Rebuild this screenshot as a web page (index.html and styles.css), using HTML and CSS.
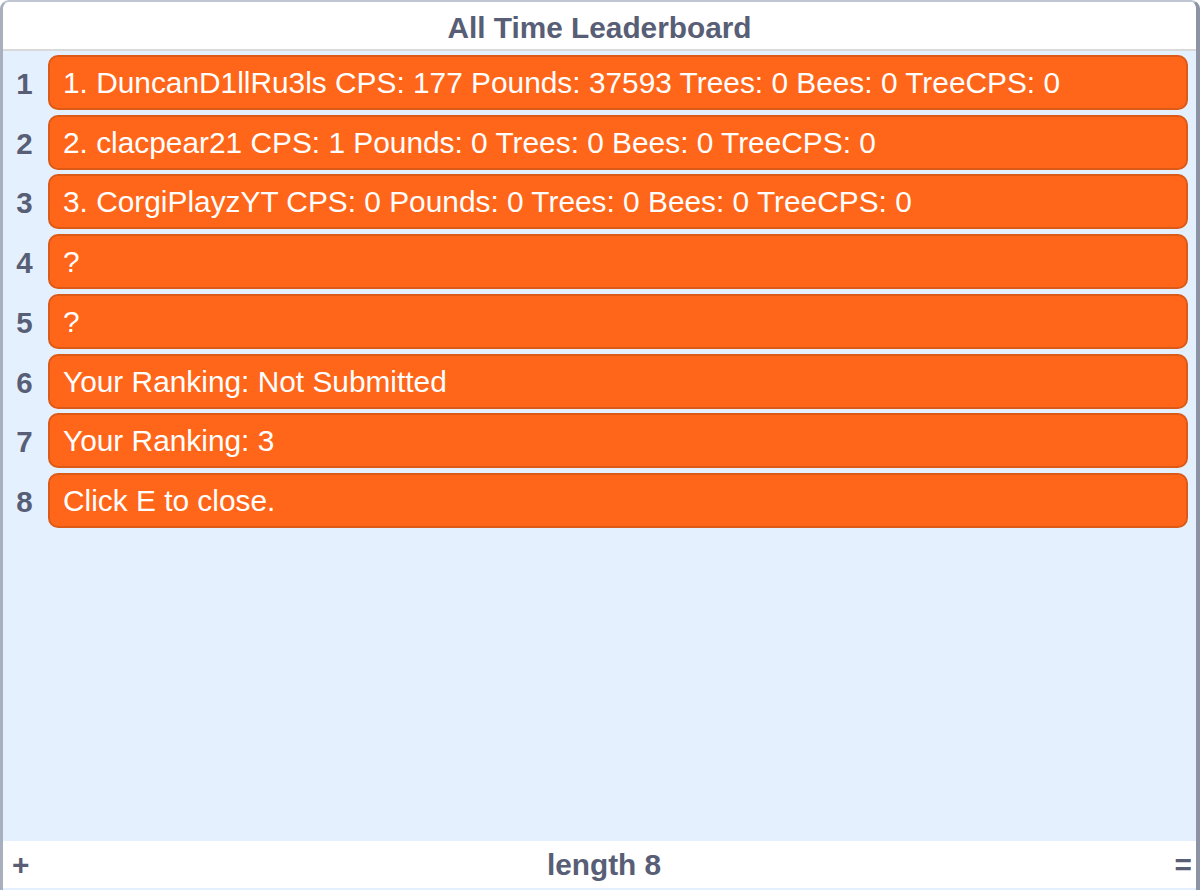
FILE: index.html
```html
<!DOCTYPE html>
<html>
<head>
<meta charset="utf-8">
<link rel="stylesheet" href="styles.css">
</head>
<body>
<div class="monitor">
  <div class="header">All Time Leaderboard</div>
  <div class="list">
    <div class="row"><div class="index">1</div><div class="value">1. DuncanD1llRu3ls CPS: 177 Pounds: 37593 Trees: 0 Bees: 0 TreeCPS: 0</div></div>
    <div class="row"><div class="index">2</div><div class="value">2. clacpear21 CPS: 1 Pounds: 0 Trees: 0 Bees: 0 TreeCPS: 0</div></div>
    <div class="row"><div class="index">3</div><div class="value">3. CorgiPlayzYT CPS: 0 Pounds: 0 Trees: 0 Bees: 0 TreeCPS: 0</div></div>
    <div class="row"><div class="index">4</div><div class="value">?</div></div>
    <div class="row"><div class="index">5</div><div class="value">?</div></div>
    <div class="row"><div class="index">6</div><div class="value">Your Ranking: Not Submitted</div></div>
    <div class="row"><div class="index">7</div><div class="value">Your Ranking: 3</div></div>
    <div class="row"><div class="index">8</div><div class="value">Click E to close.</div></div>
  </div>
  <div class="footer">
    <span class="add">+</span>
    <span class="length">length 8</span>
    <span class="resize">=</span>
  </div>
  <div class="bottom-line"></div>
</div>
</body>
</html>
```

FILE: styles.css
```css
html, body {
  margin: 0;
  padding: 0;
  background: #ffffff;
}

body {
  font-family: "Liberation Sans", Arial, sans-serif;
  color: #575e75;
}

.monitor {
  box-sizing: border-box;
  width: 1200px;
  height: 890px;
  display: flex;
  flex-direction: column;
  border-left: 3px solid #a9b0bd;
  border-right: 4px solid #8b93a5;
  border-top: 2px solid #bfc6d1;
  border-radius: 9px 9px 0 0;
  background: #e5f0ff;
  overflow: hidden;
}

.header {
  box-sizing: border-box;
  height: 49px;
  padding-top: 5px;
  line-height: 42px;
  background: #ffffff;
  border-bottom: 2px solid #d9d9d9;
  text-align: center;
  font-weight: bold;
  font-size: 29.8px;
}

.list {
  flex: 1;
  padding-top: 1.6px;
  padding-right: 8px;
}

.row {
  box-sizing: border-box;
  height: 59.76px;
  padding: 2.4px 0;
  display: flex;
  align-items: stretch;
}

.index {
  width: 43px;
  margin-right: 2px;
  padding-top: 3px;
  display: flex;
  align-items: center;
  justify-content: center;
  font-weight: bold;
  font-size: 29.5px;
  color: #575e75;
}

.value {
  flex: 1;
  box-sizing: border-box;
  background: #ff661a;
  border: 2px solid #dc5a17;
  border-radius: 10px;
  padding: 1px 13px 0 13px;
  display: flex;
  align-items: center;
  color: #ffffff;
  font-size: 29.85px;
  white-space: nowrap;
}

.footer {
  box-sizing: border-box;
  height: 47px;
  background: #ffffff;
  display: flex;
  align-items: center;
  justify-content: space-between;
  padding: 0 4px 0 9px;
  font-weight: bold;
  font-size: 29.8px;
  color: #575e75;
}

.length {
  margin-left: 4px;
}

.bottom-line {
  height: 2px;
  background: #e5f0ff;
}
```
